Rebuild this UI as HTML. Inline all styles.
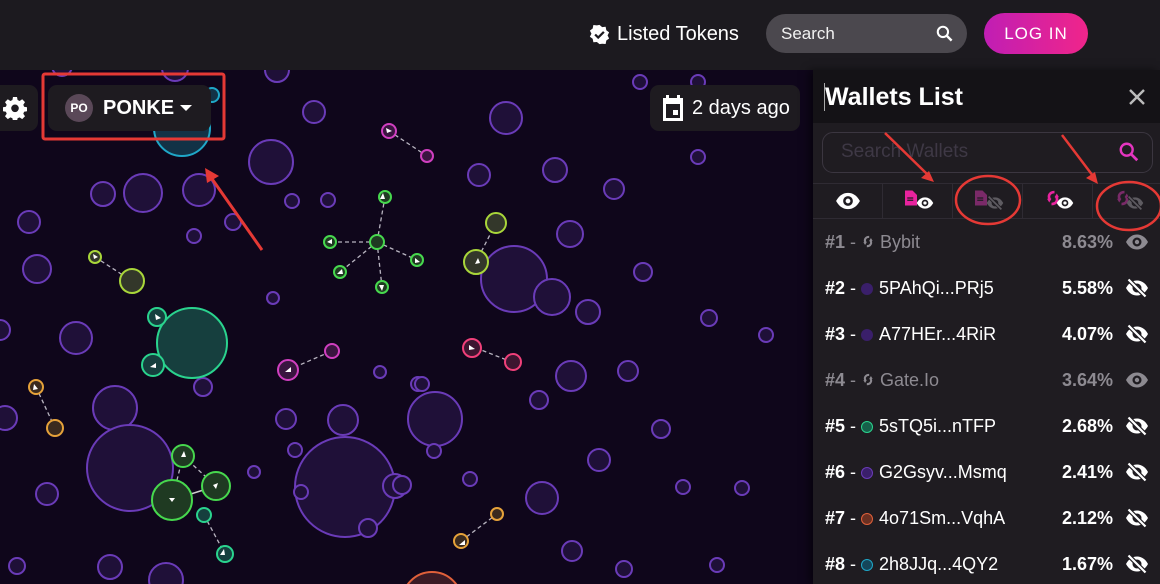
<!DOCTYPE html>
<html><head><meta charset="utf-8">
<style>
*{margin:0;padding:0;box-sizing:border-box}
html,body{overflow:hidden}
body{width:1160px;height:584px;overflow:hidden;background:#0f061b;font-family:"Liberation Sans",sans-serif;color:#fff;position:relative}
.hdr{position:absolute;left:0;top:0;width:1160px;height:70px;background:#1c1a1f}
.abs{position:absolute}
.btn{background:#1e1b20;border-radius:9px}
.panel{position:absolute;left:813px;top:70px;width:347px;height:514px;background:#1f1c21;box-shadow:-4px 0 8px rgba(0,0,0,.5);overflow:hidden}
.row{position:absolute;left:12px;width:325px;height:30px;font-size:18px;line-height:30px}
.row b{font-weight:bold}
.row .pct{position:absolute;right:37px;top:0;font-weight:bold}
.row .ic{position:absolute;right:0;top:3px}
.dot{display:inline-block;width:12px;height:12px;border-radius:50%;vertical-align:-1px;margin-right:6px}
.dim{color:#8d8a91}
</style></head><body>
<svg width="0" height="0" style="position:absolute">
<defs>
<symbol id="eye" viewBox="0 0 24 24"><path fill="currentColor" fill-rule="evenodd" d="M1 12C4 6.5 8 4.5 12 4.5s8 2 11 7.5c-3 5.5-7 7.5-11 7.5S4 17.5 1 12zM12 7.5a4.5 4.5 0 1 0 0 9a4.5 4.5 0 1 0 0-9zM12 9.8a2.2 2.2 0 1 1 0 4.4a2.2 2.2 0 1 1 0-4.4z"/></symbol>
<symbol id="eyex" viewBox="0 0 24 24"><path fill="currentColor" fill-rule="evenodd" d="M1 12C4 6.5 8 4.5 12 4.5s8 2 11 7.5c-3 5.5-7 7.5-11 7.5S4 17.5 1 12zM12 7.5a4.5 4.5 0 1 0 0 9a4.5 4.5 0 1 0 0-9zM12 9.8a2.2 2.2 0 1 1 0 4.4a2.2 2.2 0 1 1 0-4.4z"/><path d="M3 3L21 21" stroke="#1f1c21" stroke-width="4.5"/><path d="M3.5 3.5L20.5 20.5" stroke="currentColor" stroke-width="2.2"/></symbol>
<symbol id="doc" viewBox="0 0 24 24"><path fill="currentColor" d="M4 2h10l6 6v14H4z"/><path d="M7 12h8M7 15h8" stroke="#1f1c21" stroke-width="1.6"/></symbol>
<symbol id="swap" viewBox="0 0 24 24"><path fill="none" stroke="currentColor" stroke-width="3.5" d="M14 4C7 4 5 10 8 14M10 20c7 0 9-6 6-10"/><path fill="currentColor" d="M4 13l6 0-3 5zM20 11l-6 0 3-5z"/></symbol>
</defs></svg>

<svg class="abs" style="left:0;top:70px" width="813" height="514" viewBox="0 70 813 514">
<g fill="#1f1038" stroke="#6a3bb8" stroke-width="2">
<circle cx="62" cy="66" r="10"/><circle cx="175" cy="68" r="13"/><circle cx="277" cy="70" r="12"/><circle cx="640" cy="82" r="7"/><circle cx="698" cy="82" r="7"/>
<circle cx="314" cy="112" r="11"/><circle cx="271" cy="162" r="22"/><circle cx="143" cy="193" r="19"/><circle cx="103" cy="194" r="12"/><circle cx="199" cy="190" r="16"/>
<circle cx="233" cy="222" r="8"/><circle cx="194" cy="236" r="7"/><circle cx="29" cy="222" r="11"/><circle cx="292" cy="201" r="7"/><circle cx="328" cy="200" r="7"/>
<circle cx="37" cy="269" r="14"/><circle cx="0" cy="330" r="10"/><circle cx="506" cy="118" r="16"/><circle cx="479" cy="175" r="11"/><circle cx="555" cy="170" r="12"/>
<circle cx="614" cy="189" r="10"/><circle cx="698" cy="157" r="7"/><circle cx="570" cy="234" r="13"/><circle cx="643" cy="272" r="9"/><circle cx="514" cy="279" r="33"/>
<circle cx="552" cy="297" r="18"/><circle cx="588" cy="312" r="12"/><circle cx="709" cy="318" r="8"/><circle cx="766" cy="335" r="7"/>
<circle cx="76" cy="338" r="16"/><circle cx="203" cy="387" r="9"/><circle cx="273" cy="298" r="6"/><circle cx="380" cy="372" r="6"/><circle cx="418" cy="384" r="7"/>
<circle cx="115" cy="408" r="22"/><circle cx="5" cy="418" r="12"/><circle cx="130" cy="468" r="43"/><circle cx="343" cy="420" r="15"/><circle cx="286" cy="419" r="10"/>
<circle cx="295" cy="450" r="7"/><circle cx="254" cy="472" r="6"/><circle cx="345" cy="487" r="50"/><circle cx="395" cy="486" r="12"/><circle cx="368" cy="528" r="9"/><circle cx="301" cy="492" r="7"/>
<circle cx="47" cy="494" r="11"/><circle cx="110" cy="567" r="12"/><circle cx="17" cy="566" r="8"/><circle cx="166" cy="580" r="17"/>
<circle cx="571" cy="376" r="15"/><circle cx="628" cy="371" r="10"/><circle cx="422" cy="384" r="7"/><circle cx="435" cy="419" r="27"/><circle cx="434" cy="451" r="7"/>
<circle cx="539" cy="400" r="9"/><circle cx="661" cy="429" r="9"/><circle cx="470" cy="479" r="7"/><circle cx="599" cy="460" r="11"/><circle cx="742" cy="488" r="7"/>
<circle cx="542" cy="498" r="16"/><circle cx="683" cy="487" r="7"/><circle cx="572" cy="551" r="10"/><circle cx="624" cy="569" r="8"/><circle cx="717" cy="565" r="7"/><circle cx="402" cy="485" r="9"/>
</g>
<circle cx="432" cy="602" r="30" fill="#3a1a25" stroke="#e0603a" stroke-width="2"/>
<circle cx="182" cy="128" r="28" fill="#123246" stroke="#1fa7c8" stroke-width="2"/>
<circle cx="212" cy="95" r="7" fill="#123246" stroke="#1fa7c8" stroke-width="2"/>
<g stroke="#b8b4c0" stroke-width="1.3" stroke-dasharray="4 3" fill="none">
<path d="M389 131L427 156M377 242L385 197M377 242L330 242M377 242L417 260M377 242L340 272M377 242L382 287M496 223L476 262M95 257L132 281M157 317L188 343L153 365M36 387L55 428M288 370L332 351M183 456L216 486M183 456L172 500M204 515L225 554M476 348L512 362M461 541L497 514"/>
</g>
<path d="M216 486L172 500" stroke="#ccc" stroke-width="1.5"/>
<g stroke-width="2">
<circle cx="192" cy="343" r="35" fill="#163f3e" stroke="#2ad38e"/>
<circle cx="157" cy="317" r="9" fill="#163f3e" stroke="#2ad38e"/><circle cx="153" cy="365" r="11" fill="#163f3e" stroke="#2ad38e"/>
<circle cx="204" cy="515" r="7" fill="#163f3e" stroke="#2ad38e"/><circle cx="225" cy="554" r="8" fill="#163f3e" stroke="#2ad38e"/>
<circle cx="183" cy="456" r="11" fill="#1f3a22" stroke="#47d84e"/><circle cx="216" cy="486" r="14" fill="#1f3a22" stroke="#47d84e"/><circle cx="172" cy="500" r="20" fill="#1f3a22" stroke="#47d84e"/>
<circle cx="377" cy="242" r="7" fill="#1f3a22" stroke="#47d84e"/><circle cx="385" cy="197" r="6" fill="#1f3a22" stroke="#47d84e"/><circle cx="330" cy="242" r="6" fill="#1f3a22" stroke="#47d84e"/>
<circle cx="417" cy="260" r="6" fill="#1f3a22" stroke="#47d84e"/><circle cx="340" cy="272" r="6" fill="#1f3a22" stroke="#47d84e"/><circle cx="382" cy="287" r="6" fill="#1f3a22" stroke="#47d84e"/>
<circle cx="496" cy="223" r="10" fill="#33372a" stroke="#a9d63a"/><circle cx="476" cy="262" r="12" fill="#33372a" stroke="#a9d63a"/>
<circle cx="95" cy="257" r="6" fill="#33372a" stroke="#a9d63a"/><circle cx="132" cy="281" r="12" fill="#33372a" stroke="#a9d63a"/>
<circle cx="36" cy="387" r="7" fill="#3a2a1e" stroke="#e6a23a"/><circle cx="55" cy="428" r="8" fill="#3a2a1e" stroke="#e6a23a"/>
<circle cx="461" cy="541" r="7" fill="#3a2a1e" stroke="#e6a23a"/><circle cx="497" cy="514" r="6" fill="#3a2a1e" stroke="#e6a23a"/>
<circle cx="389" cy="131" r="7" fill="#3a1540" stroke="#d03fc0"/><circle cx="427" cy="156" r="6" fill="#3a1540" stroke="#d03fc0"/>
<circle cx="288" cy="370" r="10" fill="#3a1540" stroke="#d03fc0"/><circle cx="332" cy="351" r="7" fill="#3a1540" stroke="#d03fc0"/>
<circle cx="472" cy="348" r="9" fill="#3d1530" stroke="#f0407a"/><circle cx="513" cy="362" r="8" fill="#3d1530" stroke="#f0407a"/>
</g>
<g fill="#fff">
<path d="M155 314l6 4-5 2z"/><path d="M150 367l6-4 0 5z"/><path d="M184 451l-3 6 5 0z"/><path d="M218 483l-5 2 3 4z"/><path d="M169 498l6 0-3 4z"/><path d="M224 549l-4 6 5 0z"/>
<path d="M383 193l-3 6 5 0z"/><path d="M327 242l5-3 0 5z"/><path d="M337 274l5-5 1 5z"/><path d="M382 291l-3-6 5 0z"/><path d="M420 262l-5-4 0 5z"/>
<path d="M478 258l-3 6 5-1z"/><path d="M93 254l5 3-4 2z"/><path d="M34 384l4 5-5 1z"/><path d="M285 372l6-5 0 5z"/><path d="M386 128l6 3-5 2z"/><path d="M469 345l6 4-6 1z"/><path d="M459 545l6-5 0 5z"/>
</g>
<g stroke="#e53935" stroke-width="3" fill="none">
<rect x="43" y="74" width="181" height="65" rx="2"/>
<path d="M262 250L210 176"/>
</g>
<path d="M205 168l2 15 12-7z" fill="#e53935"/>
</svg>

<div class="hdr"></div>
<svg class="abs" style="left:589px;top:24px" width="21" height="21" viewBox="0 0 24 24"><path fill="#fff" d="M12 1l3 2.5 4-.3.8 3.9 3.2 2.4-1.8 3.5 1.8 3.5-3.2 2.4-.8 3.9-4-.3L12 23l-3-2.5-4 .3-.8-3.9L1 14.5 2.8 11 1 7.5l3.2-2.4L5 1.2l4 .3z"/><path d="M7 12l3.5 3.5L17 9" stroke="#1c1a1f" stroke-width="2.6" fill="none"/></svg>
<div class="abs" style="left:617px;top:22px;font-size:20px;line-height:24px">Listed Tokens</div>
<div class="abs" style="left:766px;top:14px;width:201px;height:39px;border-radius:20px;background:#4b484e"></div>
<div class="abs" style="left:781px;top:23px;font-size:17px;line-height:21px;color:#f2f2f2">Search</div>
<svg class="abs" style="left:935px;top:24px" width="19" height="19" viewBox="0 0 24 24"><circle cx="10" cy="10" r="6.5" stroke="#fff" stroke-width="2.6" fill="none"/><path d="M15 15l6 6" stroke="#fff" stroke-width="3"/></svg>
<div class="abs" style="left:984px;top:13px;width:104px;height:41px;border-radius:21px;background:linear-gradient(90deg,#c01eb4,#f0258a);font-size:17px;line-height:41px;text-align:center;letter-spacing:1px">LOG IN</div>

<div class="abs btn" style="left:-10px;top:85px;width:48px;height:46px;border-radius:0 9px 9px 0"></div>
<svg class="abs" style="left:3px;top:96px" width="24" height="24" viewBox="0 0 24 24"><path fill="#fff" fill-rule="evenodd" d="M10 1h4l.6 3 2 1 2.6-1.7 2.8 2.8L20.3 8.7l.8 2 2.9.5v4l-2.9.5-.8 2 1.7 2.6-2.8 2.8-2.6-1.7-2 .8-.6 2.8h-4l-.6-2.8-2-.8-2.6 1.7-2.8-2.8 1.7-2.6-.8-2L0 15.2v-4l2.9-.5.8-2L2 6.1l2.8-2.8 2.6 1.7 2-1zM12 8.5a3.8 3.8 0 1 0 0 7.6a3.8 3.8 0 1 0 0-7.6z"/></svg>
<div class="abs btn" style="left:48px;top:85px;width:163px;height:46px"></div>
<div class="abs" style="left:65px;top:94px;width:28px;height:28px;border-radius:50%;background:#5a4858;font-size:12px;font-weight:bold;line-height:28px;text-align:center">PO</div>
<div class="abs" style="left:103px;top:96px;font-size:20px;font-weight:bold;line-height:24px">PONKE</div>
<div class="abs" style="left:180px;top:105px;width:0;height:0;border-left:6px solid transparent;border-right:6px solid transparent;border-top:6px solid #fff"></div>

<div class="abs btn" style="left:650px;top:85px;width:150px;height:46px"></div>
<svg class="abs" style="left:661px;top:95px" width="24" height="26" viewBox="0 0 24 26"><path fill="#fff" fill-rule="evenodd" d="M5 0h3v3h8V0h3v3h3v23H2V3h3zM5 9v14h14V9z"/><rect x="12" y="15" width="5" height="5" fill="#fff"/></svg>
<div class="abs" style="left:692px;top:96px;font-size:20px;line-height:24px">2 days ago</div>

<div class="panel">
<div class="abs" style="left:0;top:0;width:347px;height:53px;background:#141216"></div>
<div class="abs" style="left:11px;top:13px;width:1px;height:28px;background:#aaa"></div>
<div class="abs" style="left:12px;top:12px;font-size:25px;font-weight:bold;line-height:30px">Wallets List</div>
<svg class="abs" style="left:315px;top:18px" width="18" height="18" viewBox="0 0 18 18"><path d="M2 2L16 16M16 2L2 16" stroke="#bbb" stroke-width="2.4"/></svg>
<div class="abs" style="left:9px;top:62px;width:331px;height:41px;border:1px solid #3b3640;border-radius:11px"></div>
<div class="abs" style="left:28px;top:70px;font-size:19px;line-height:24px;color:#3e3845">Search Wallets</div>
<svg class="abs" style="left:305px;top:71px" width="22" height="22" viewBox="0 0 24 24"><circle cx="9.5" cy="9.5" r="6.5" stroke="#e535c0" stroke-width="2.6" fill="none"/><path d="M14.5 14.5l6.5 6.5" stroke="#e535c0" stroke-width="3"/></svg>
<div class="abs" style="left:0;top:113px;width:347px;height:36px;border-top:1px solid #2f2b33;border-bottom:1px solid #2f2b33"></div>
<div class="abs" style="left:69px;top:113px;width:1px;height:36px;background:#2f2b33"></div>
<div class="abs" style="left:139px;top:113px;width:1px;height:36px;background:#2f2b33"></div>
<div class="abs" style="left:209px;top:113px;width:1px;height:36px;background:#2f2b33"></div>
<div class="abs" style="left:279px;top:113px;width:1px;height:36px;background:#2f2b33"></div>
<svg class="abs" style="left:21px;top:118px;color:#fff" width="28" height="26"><use href="#eye"/></svg>
<svg class="abs" style="left:89px;top:118px;color:#e8239e" width="18" height="20"><use href="#doc"/></svg>
<svg class="abs" style="left:102px;top:124px;color:#fff" width="20" height="18"><use href="#eye"/></svg>
<svg class="abs" style="left:159px;top:118px;color:#7a2a68" width="18" height="20"><use href="#doc"/></svg>
<svg class="abs" style="left:172px;top:124px;color:#5e5b61" width="20" height="18"><use href="#eyex"/></svg>
<svg class="abs" style="left:231px;top:118px;color:#e8239e" width="18" height="20"><use href="#swap"/></svg>
<svg class="abs" style="left:242px;top:124px;color:#fff" width="20" height="18"><use href="#eye"/></svg>
<svg class="abs" style="left:301px;top:118px;color:#7a2a68" width="18" height="20"><use href="#swap"/></svg>
<svg class="abs" style="left:312px;top:124px;color:#5e5b61" width="20" height="18"><use href="#eyex"/></svg>

<div class="row dim" style="top:157px"><b>#1</b> - <svg width="14" height="15" style="vertical-align:-1px;color:#8d8a91"><use href="#swap"/></svg> Bybit<span class="pct">8.63%</span><svg class="ic" width="26" height="24" style="color:#8d8a91"><use href="#eye"/></svg></div>
<div class="row" style="top:203px"><b>#2</b> - <span class="dot" style="background:#3a1f6a"></span>5PAhQi...PRj5<span class="pct">5.58%</span><svg class="ic" width="26" height="24" style="color:#fff"><use href="#eyex"/></svg></div>
<div class="row" style="top:249px"><b>#3</b> - <span class="dot" style="background:#3a1f6a"></span>A77HEr...4RiR<span class="pct">4.07%</span><svg class="ic" width="26" height="24" style="color:#fff"><use href="#eyex"/></svg></div>
<div class="row dim" style="top:295px"><b>#4</b> - <svg width="14" height="15" style="vertical-align:-1px;color:#8d8a91"><use href="#swap"/></svg> Gate.Io<span class="pct">3.64%</span><svg class="ic" width="26" height="24" style="color:#8d8a91"><use href="#eye"/></svg></div>
<div class="row" style="top:341px"><b>#5</b> - <span class="dot" style="background:#16604a;border:1px solid #2ad38e"></span>5sTQ5i...nTFP<span class="pct">2.68%</span><svg class="ic" width="26" height="24" style="color:#fff"><use href="#eyex"/></svg></div>
<div class="row" style="top:387px"><b>#6</b> - <span class="dot" style="background:#3a1f6a;border:1px solid #6a3bb8"></span>G2Gsyv...Msmq<span class="pct">2.41%</span><svg class="ic" width="26" height="24" style="color:#fff"><use href="#eyex"/></svg></div>
<div class="row" style="top:433px"><b>#7</b> - <span class="dot" style="background:#6a3022;border:1px solid #e0603a"></span>4o71Sm...VqhA<span class="pct">2.12%</span><svg class="ic" width="26" height="24" style="color:#fff"><use href="#eyex"/></svg></div>
<div class="row" style="top:479px"><b>#8</b> - <span class="dot" style="background:#14465a;border:1px solid #1fa7c8"></span>2h8JJq...4QY2<span class="pct">1.67%</span><svg class="ic" width="26" height="24" style="color:#fff"><use href="#eyex"/></svg></div>
</div>

<svg class="abs" style="left:813px;top:70px" width="347" height="200" viewBox="813 70 347 200">
<g stroke="#e53935" stroke-width="2.5" fill="none">
<path d="M885 133L928 175M1062 135L1093 176"/>
<ellipse cx="988" cy="200" rx="32" ry="24"/>
<ellipse cx="1129" cy="206" rx="32" ry="24"/>
</g>
<path d="M934 182l-13-4 8-7z M1098 184l-12-6 9-6z" fill="#e53935"/>
</svg>
</body></html>
